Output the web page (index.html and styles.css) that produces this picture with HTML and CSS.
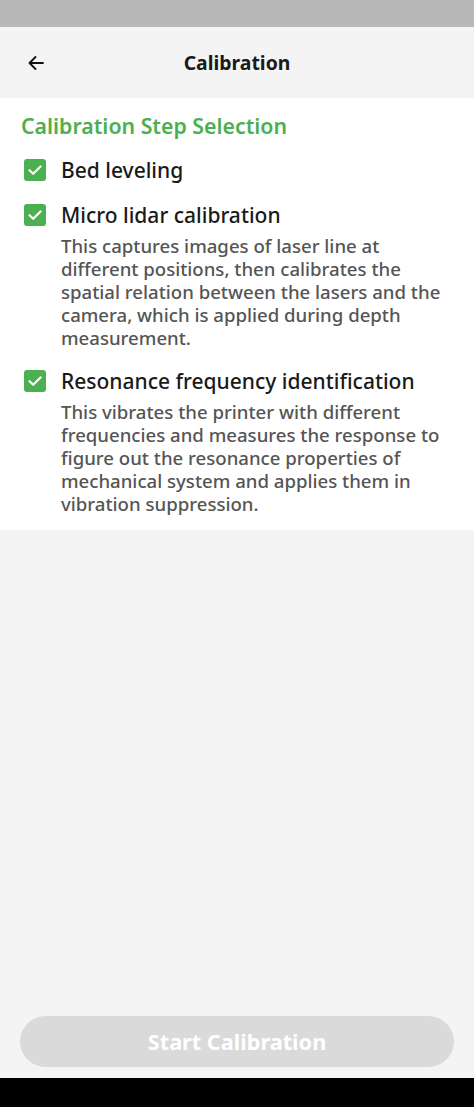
FILE: index.html
```html
<!DOCTYPE html>
<html lang="en">
<head>
<meta charset="utf-8">
<title>Calibration</title>
<link rel="stylesheet" href="styles.css">
</head>
<body>
<div class="screen">
  <div class="status-bar"></div>
  <header class="app-bar">
    <button class="back" aria-label="Back">
      <svg width="20" height="20" viewBox="0 0 20 20"><path d="M17 10H3.5M9.5 4L3.5 10l6 6" fill="none" stroke="#111" stroke-width="1.8" stroke-linecap="round" stroke-linejoin="round"/></svg>
    </button>
    <h1 class="title">Calibration</h1>
  </header>
  <main class="content">
    <h2 class="section-title">Calibration Step Selection</h2>
    <ul class="steps">
      <li class="step">
        <span class="check"><svg width="22" height="22" viewBox="0 0 22 22"><path d="M5.5 11.2l3.7 3.6 7.3-7.4" fill="none" stroke="#fff" stroke-width="2.2" stroke-linecap="round" stroke-linejoin="round"/></svg></span>
        <div class="step-body">
          <div class="step-label">Bed leveling</div>
        </div>
      </li>
      <li class="step">
        <span class="check"><svg width="22" height="22" viewBox="0 0 22 22"><path d="M5.5 11.2l3.7 3.6 7.3-7.4" fill="none" stroke="#fff" stroke-width="2.2" stroke-linecap="round" stroke-linejoin="round"/></svg></span>
        <div class="step-body">
          <div class="step-label">Micro lidar calibration</div>
          <p class="step-desc">This captures images of laser line at different positions, then calibrates the spatial relation between the lasers and the camera, which is applied during depth measurement.</p>
        </div>
      </li>
      <li class="step">
        <span class="check"><svg width="22" height="22" viewBox="0 0 22 22"><path d="M5.5 11.2l3.7 3.6 7.3-7.4" fill="none" stroke="#fff" stroke-width="2.2" stroke-linecap="round" stroke-linejoin="round"/></svg></span>
        <div class="step-body">
          <div class="step-label">Resonance frequency identification</div>
          <p class="step-desc">This vibrates the printer with different frequencies and measures the response to figure out the resonance properties of mechanical system and applies them in vibration suppression.</p>
        </div>
      </li>
    </ul>
  </main>
  <div class="spacer"></div>
  <div class="actions">
    <button class="start" disabled>Start Calibration</button>
  </div>
  <div class="nav-bar"></div>
</div>
</body>
</html>
```

FILE: styles.css
```css
* { box-sizing: border-box; }
html, body { margin: 0; padding: 0; }
body {
  font-family: "Noto Sans", "Open Sans", Arial, sans-serif;
  background: #f4f4f4;
}
.screen {
  width: 474px;
  height: 1107px;
  display: flex;
  flex-direction: column;
  background: #f4f4f4;
}
.status-bar { height: 27px; background: #b8b8b8; flex: none; }
.app-bar {
  height: 71px;
  flex: none;
  display: flex;
  align-items: center;
  justify-content: center;
  position: relative;
  background: #f4f4f4;
}
.back {
  position: absolute;
  left: 25px;
  top: 25px;
  width: 22px;
  height: 22px;
  padding: 0;
  border: 0;
  background: none;
  display: flex;
  align-items: center;
  justify-content: center;
}
.title {
  margin: 0;
  font-size: 19.4px;
  font-weight: 700;
  color: #1a1a1a;
}
.content {
  background: #fff;
  padding: 14px 21px 13px 21px;
  flex: none;
}
.section-title {
  margin: 0;
  font-size: 21.3px;
  line-height: 28px;
  font-weight: 600;
  color: #4caf50;
}
.steps {
  list-style: none;
  margin: 15px 0 0 0;
  padding: 0;
  display: flex;
  flex-direction: column;
  gap: 15px;
}
.step {
  display: flex;
  align-items: flex-start;
  gap: 15px;
  padding-left: 3px;
}
.check {
  width: 22px;
  height: 22px;
  margin-top: 4px;
  flex: none;
  border-radius: 3px;
  background: #4caf50;
  display: flex;
}
.step-label {
  font-size: 21px;
  line-height: 30px;
  font-weight: 500;
  color: #1a1a1a;
}
.step-desc {
  margin: 4px 0 0 0;
  padding-bottom: 2px;
  font-size: 18.6px;
  line-height: 23px;
  font-weight: 500;
  color: #555;
}
.spacer { flex: 1; }
.actions {
  padding: 0 20px 11px 20px;
  flex: none;
}
.start {
  width: 100%;
  height: 51px;
  border: 0;
  border-radius: 26px;
  background: #dadada;
  color: #fff;
  font-family: inherit;
  font-size: 21.7px;
  font-weight: 700;
}
.nav-bar { height: 29px; background: #000; flex: none; }
```
